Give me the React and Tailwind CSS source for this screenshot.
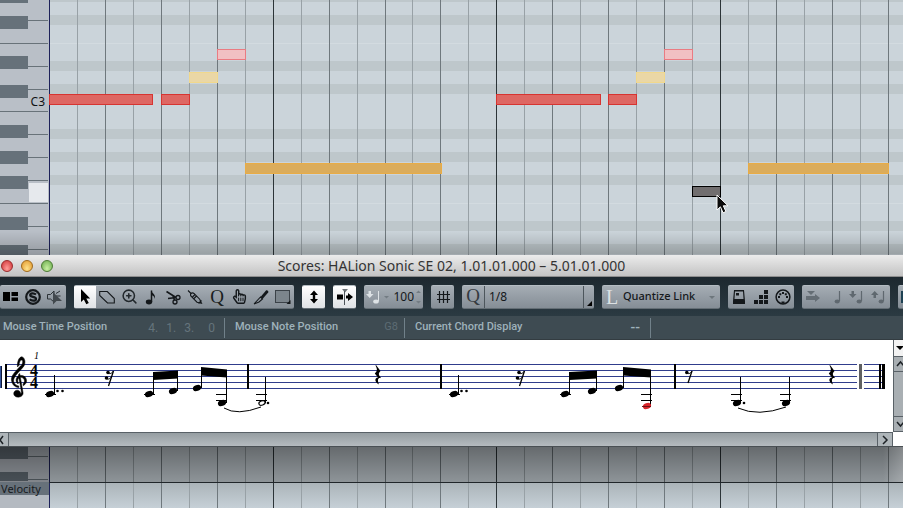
import { useState } from 'react';
import { GiGClef } from 'react-icons/gi';
import { FaRegHandPointer } from 'react-icons/fa';
import { ZoomIn } from 'lucide-react';

// 24 eighth notes take up 671px at this zoom level
const eighthToX = (i) => Math.round((i * 671) / 24);
const GRID_LINES = Array.from({ length: 60 }, (_, i) => i);

const BLACK_ROWS = [-8, 15, 61, 84, 129, 152, 175, 221, 244];
const OCTAVE_LINES = [43, 203];
const BLACK_KEYS = [-10, 16, 56, 85, 125, 151, 176, 217, 245];
const WHITE_KEYS = [21, 23, 23, 23, 22, 23, 23, 23, 23, 23, 23];

const NOTE_COLORS = {
  red: 'bg-[#de6763] border-[#d73431]',
  yellow: 'bg-[#ead7a6] border-[#f1d88c]',
  pink: 'bg-[#f1c0c3] border-[#ea7b82]',
  orange: 'bg-[#dbac5b] border-[#e9ac45]',
  selected: 'bg-[#716e6f] border-black',
};

const NOTES = [
  { x: 0, y: 94, w: 104, color: 'red' },
  { x: 112, y: 94, w: 29, color: 'red' },
  { x: 140, y: 72, w: 29, color: 'yellow' },
  { x: 168, y: 49, w: 29, color: 'pink' },
  { x: 196, y: 163, w: 197, color: 'orange' },
  { x: 447, y: 94, w: 105, color: 'red' },
  { x: 559, y: 94, w: 29, color: 'red' },
  { x: 587, y: 72, w: 29, color: 'yellow' },
  { x: 615, y: 49, w: 29, color: 'pink' },
  { x: 643, y: 186, w: 29, color: 'selected' },
  { x: 699, y: 163, w: 141, color: 'orange' },
];

function lineColor(i) {
  if (i === 0) return 'bg-[#1d2159]';
  if (i % 8 === 0) return 'bg-[#2c3438]';
  return i % 2 === 0 ? 'bg-[#6f787d]' : 'bg-[#98a1a6]';
}

function GridLines() {
  return GRID_LINES.map((i) => (
    <div
      key={i}
      className={`absolute inset-y-0 w-px ${lineColor(i)}`}
      style={{ left: eighthToX(i) }}
    />
  ));
}

function Keyboard() {
  return (
    <div className="relative w-[49px] shrink-0 overflow-hidden bg-[#b9bfc7]">
      {WHITE_KEYS.map((h, i) => (
        <div
          key={i}
          className="mr-px flex items-end justify-end border-b border-[#687279] pr-[3px]"
          style={{ height: h }}
        >
          {i === 4 && <span className="text-[12px] leading-[18px] text-[#101214]">C3</span>}
        </div>
      ))}
      {BLACK_KEYS.map((y) => (
        <div key={y} className="absolute left-0 h-[13px] w-7 bg-[#66717a]" style={{ top: y }} />
      ))}
      <div className="absolute left-[29px] top-[183px] h-[19px] w-[19px] bg-[#e6e9ed]" />
    </div>
  );
}

function PianoRoll() {
  return (
    <section aria-label="Key editor" className="relative flex h-[255px] shrink-0">
      <Keyboard />
      <div className="relative flex-1 overflow-hidden bg-[#cbd4da]">
        {BLACK_ROWS.map((y) => (
          <div key={y} className="absolute inset-x-0 h-[10px] bg-[#bec7cb]" style={{ top: y }} />
        ))}
        {OCTAVE_LINES.map((y) => (
          <div key={y} className="absolute inset-x-0 h-px bg-[#d3dbe0]" style={{ top: y }} />
        ))}
        <GridLines />
        {NOTES.map((n) => (
          <div
            key={n.x}
            className={`absolute h-[11px] border ${NOTE_COLORS[n.color]}`}
            style={{ left: n.x, top: n.y, width: n.w }}
          />
        ))}
        <svg className="absolute left-[667px] top-[194px]" width="14" height="20" viewBox="0 0 14 20">
          <path d="M1 1v15l3.4-3.2 2.7 6 2.8-1.3-2.6-5.7H12z" fill="#0a0a0a" stroke="#fff" strokeWidth="1" />
        </svg>
      </div>
      <div className="absolute inset-x-0 bottom-0 h-6 bg-gradient-to-b from-transparent to-black/20" />
    </section>
  );
}

function TitleBar() {
  return (
    <header className="grid h-[22px] grid-cols-[1fr_auto_1fr] items-center border-b border-[#8d8d8d] bg-gradient-to-b from-[#ececec] to-[#c3c3c3]">
      <div className="flex gap-2 pl-px">
        <button aria-label="Close" className="size-3 rounded-full border border-[#9a2b2b] bg-radial-[at_50%_75%] from-[#ff9c98] to-[#cf2f33]" />
        <button aria-label="Minimize" className="size-3 rounded-full border border-[#a0691a] bg-radial-[at_50%_75%] from-[#ffe28a] to-[#e0952a]" />
        <button aria-label="Zoom" className="size-3 rounded-full border border-[#4c7a34] bg-radial-[at_50%_75%] from-[#c9f0a2] to-[#67a94a]" />
      </div>
      <h1 className="text-[14px] leading-5 text-[#333]">
        Scores: HALion Sonic SE 02, 1.01.01.000 – 5.01.01.000
      </h1>
    </header>
  );
}

function Group({ className = '', children }) {
  return (
    <div
      className={`flex h-6 shrink-0 overflow-hidden rounded-xs border-y border-t-[#b4bcc2] border-b-[#646e75] bg-gradient-to-b from-[#a5adb4] via-[#959da5] to-[#858e96] ${className}`}
    >
      {children}
    </div>
  );
}

function ToolButton({ label, active, wide, onClick, children }) {
  return (
    <button
      aria-label={label}
      aria-pressed={active}
      onClick={onClick}
      className={`flex items-center justify-center ${wide ? 'w-[23px]' : 'w-[22px]'} ${active ? 'bg-gradient-to-b from-white to-[#dfe2e5]' : ''}`}
    >
      {children}
    </button>
  );
}

function Icon({ children, w = 16, className = 'text-[#14181b]' }) {
  return (
    <svg
      width={w}
      height="16"
      viewBox={`0 0 ${w} 16`}
      fill="none"
      stroke="currentColor"
      strokeWidth="1"
      className={`shrink-0 ${className}`}
    >
      {children}
    </svg>
  );
}

const TOOLS = [
  {
    name: 'Object selection',
    icon: (
      <Icon>
        <path d="M4 0v13l2.800-2.600 2.500 4.900 2.500-1.200-2.500-4.700h3.900z" fill="#000" stroke="none" />
      </Icon>
    ),
  },
  {
    name: 'Erase',
    icon: (
      <Icon>
        <path d="M.7 2.500h7.600l7 7v4.500H8.500L.7 6.500z M8.500 14l-.3-.3" strokeWidth="1.100" />
      </Icon>
    ),
  },
  { name: 'Zoom', icon: <ZoomIn size={17} strokeWidth={2.2} className="text-[#22282c]" /> },
  {
    name: 'Insert note',
    icon: (
      <Icon>
        <ellipse cx="6" cy="13" rx="3.200" ry="2.400" fill="currentColor" stroke="none" />
        <path d="M8.500 13V1.500" strokeWidth="1.500" />
        <path d="M8.200 1.500c.8 3 5 3.500 3.500 8.500 0-2.500-1.700-3.500-3.500-4z" fill="currentColor" stroke="none" />
      </Icon>
    ),
  },
  {
    name: 'Split',
    icon: (
      <Icon>
        <path d="M1.500 2.500l9.500 6M3 9.500l8-1M8 7l1.500 4" strokeWidth="1.600" />
        <circle cx="13" cy="8.500" r="2" strokeWidth="1.300" />
        <circle cx="10" cy="13" r="2" strokeWidth="1.300" />
      </Icon>
    ),
  },
  {
    name: 'Glue',
    icon: (
      <Icon>
        <path d="M1 1.500l3 3M4 4.500c1.200-1.200 2.200-.8 3.200.2l5.500 5.500 1.800 4-4.500-1-5.500-5.500c-1-1-1.500-2.200-.5-3.200zM5.500 8L8 5.500M7 9.500L9.500 7M11.500 14.500l3-3" strokeWidth="1.100" />
      </Icon>
    ),
  },
  { name: 'Quantize', icon: <span className="font-serif-q text-[19px] leading-5 text-[#1a1e21]">Q</span> },
  { name: 'Layout', icon: <FaRegHandPointer size={15} className="text-[#14181b]" /> },
  {
    name: 'Cut notes',
    icon: (
      <Icon>
        <path d="M1 15L7.500 8l2 2-3.500 3z" strokeWidth="1.100" />
        <path d="M7.500 8l5.500-6.500c1-1 3 .8 2.200 2L9.500 10z" fill="currentColor" stroke="none" />
      </Icon>
    ),
  },
  {
    name: 'Color',
    icon: (
      <Icon>
        <rect x=".5" y="1.500" width="14" height="12" fill="#7c858c" stroke="#3b4248" />
        <path d="M15.500 11v4h-4z" fill="currentColor" stroke="none" />
      </Icon>
    ),
  },
];

function QuarterNote({ arrow }) {
  return (
    <Icon className="text-[#5f686f]">
      <path d="M12.500 2v10" strokeWidth="1.200" />
      <ellipse cx="10.200" cy="12.500" rx="2.600" ry="2" fill="currentColor" stroke="none" />
      {arrow === 'down' && <path d="M2.500 2h2.500v3h2.500L3.700 9 0 5h2.500z" fill="currentColor" stroke="none" />}
      {arrow === 'up' && <path d="M2.500 9h2.500V6h2.500L3.700 2 0 6h2.500z" fill="currentColor" stroke="none" />}
    </Icon>
  );
}

function Toolbar() {
  const [tool, setTool] = useState('Object selection');

  return (
    <div className="flex h-[39px] items-center gap-2 overflow-hidden bg-gradient-to-b from-[#1d282f] to-[#2b3a42]">
      <Group>
        <ToolButton label="Show zones">
          <Icon>
            <path d="M0 3h7v9H0zM8.500 3H15v4H8.500zM8.500 8.500H15V12H8.500z" fill="#000" stroke="none" />
          </Icon>
        </ToolButton>
        <ToolButton label="Solo editor">
          <Icon>
            <circle cx="8" cy="8" r="6.800" strokeWidth="2.200" />
            <path d="M11 5.500C9 3.600 5 4 5.200 6.200 5.400 8.500 11 7.300 11 9.900c0 2.300-4.500 2.400-6.300.4" strokeWidth="2.200" />
          </Icon>
        </ToolButton>
        <ToolButton label="Acoustic feedback">
          <Icon>
            <path d="M.5 5.500h3L7 2v11L3.500 10h-3zM9 4.500l4-2.500M9 7h4.500" stroke="#2c3337" />
            <path d="M6 3v12.500l3.500-3.500H15z" fill="#42494e" stroke="none" />
          </Icon>
        </ToolButton>
      </Group>

      <Group>
        {TOOLS.map((t) => (
          <ToolButton key={t.name} label={t.name} active={tool === t.name} onClick={() => setTool(t.name)}>
            {t.icon}
          </ToolButton>
        ))}
      </Group>

      <Group>
        <ToolButton label="Link pitch" active wide>
          <Icon>
            <path d="M8 1.500L12 6H9.200v4H12L8 14.500 4 10h2.800V6H4z" fill="#000" stroke="none" />
          </Icon>
        </ToolButton>
      </Group>
      <Group>
        <ToolButton label="Auto scroll" active wide>
          <Icon>
            <path d="M0 5.500h6v5H0zM9 6.500h2V4l5 4-5 4V9.500H9z" fill="#000" stroke="none" />
            <path d="M5 0h6L8 3.500z" fill="#6d7377" stroke="none" />
            <path d="M7.500 2v14" stroke="#4d5459" />
          </Icon>
        </ToolButton>
      </Group>

      <Group className="w-[59px] items-center pl-0.5">
        <Icon className="text-[#dde2e5]">
          <path d="M12.500 2v10" />
          <ellipse cx="10" cy="12.500" rx="2.800" ry="2" fill="currentColor" stroke="none" />
          <path d="M2.500 2h2.500v3h2.500L3.700 9 0 5h2.500z" fill="currentColor" stroke="none" />
        </Icon>
        <Icon w={8} className="text-[#737c83]">
          <path d="M2 7h5L4.500 9.500z" fill="currentColor" stroke="none" />
        </Icon>
        <input
          aria-label="Insert velocity"
          defaultValue="100"
          className="w-6 bg-transparent text-right text-[12px] text-[#14181b] outline-none"
        />
        <Icon w={8} className="text-[#737c83]">
          <path d="M2 4h5L4.500 1.500zM2 12h5l-2.500 2.500z" fill="currentColor" stroke="none" />
        </Icon>
      </Group>

      <Group>
        <ToolButton label="Snap" wide>
          <Icon>
            <path d="M4.500 2v12M8.500 2v12M12.500 2v12M2 5.500h13M2 10.500h13" strokeWidth="1.200" />
          </Icon>
        </ToolButton>
      </Group>

      <Group className="w-[132px]">
        <span className="font-serif-q flex w-[23px] items-center justify-center border-r border-[#4d565c] text-[19px] text-[#343a3f]">
          Q
        </span>
        <select
          aria-label="Quantize preset"
          className="w-[98px] appearance-none bg-transparent pl-1 text-[12px] text-[#14181b] outline-none"
        >
          <option>1/8</option>
        </select>
        <div className="flex flex-1 items-end justify-end border-l border-[#4d565c] pb-0.5 pr-0.5">
          <svg width="5" height="5" viewBox="0 0 5 5">
            <path d="M5 0v5H0z" fill="#000" />
          </svg>
        </div>
      </Group>

      <Group className="w-[118px] items-center pl-1">
        <span className="w-[17px] font-['Liberation_Serif',serif] text-[20px] leading-5 text-[#dce1e4]">L</span>
        <select
          aria-label="Length quantize"
          className="w-20 appearance-none bg-transparent text-[11px] font-medium text-[#14181b] outline-none"
        >
          <option>Quantize Link</option>
        </select>
        <Icon w={14} className="text-[#6d767c]">
          <path d="M6 7h6L9 10z" fill="currentColor" stroke="none" />
        </Icon>
      </Group>

      <Group>
        <ToolButton label="Step input">
          <Icon>
            <path fillRule="evenodd" d="M3 1h10l1 11v3H2v-3zM4 2.500L3.500 10h9L12 2.500zM5 4h3v2.500H5z" fill="currentColor" stroke="none" />
          </Icon>
        </ToolButton>
        <ToolButton label="Chord input">
          <Icon>
            <path d="M1 11h4v4H1zM6 11h4v4H6zM11 11h4v4h-4zM6 6h4v4H6zM11 6h4v4h-4zM11 1h4v4h-4z" fill="currentColor" stroke="none" />
          </Icon>
        </ToolButton>
        <ToolButton label="MIDI input">
          <Icon>
            <circle cx="8" cy="8" r="6.900" strokeWidth="1.500" />
            <path d="M3 7h2v2H3zM4.300 4.300h2v2h-2zM7 3h2v2H7zM9.800 4.300h2v2h-2zM11 7h2v2h-2zM6.500 12.500h3v2h-3z" fill="currentColor" stroke="none" />
          </Icon>
        </ToolButton>
      </Group>

      <Group>
        <ToolButton label="Move insert mode">
          <Icon className="text-[#656e75]">
            <path d="M1 7h9V5l5 4-5 4v-2H1zM2 2h8L6 6z" fill="currentColor" stroke="none" />
          </Icon>
        </ToolButton>
        <ToolButton label="Record pitch">
          <QuarterNote />
        </ToolButton>
        <ToolButton label="Record note-on velocity">
          <QuarterNote arrow="down" />
        </ToolButton>
        <ToolButton label="Record note-off velocity">
          <QuarterNote arrow="up" />
        </ToolButton>
      </Group>

      <Group>
        <ToolButton label="Colors">
          <Icon>
            <path d="M0 2h14v12H0z" fill="#1d4153" stroke="none" />
          </Icon>
        </ToolButton>
      </Group>
    </div>
  );
}

function InfoLine() {
  return (
    <div className="flex h-6 items-center overflow-hidden border-b border-[#333c41] bg-[#3e4b52] font-['Roboto',sans-serif] text-[11px] font-medium whitespace-pre text-[#9fb2bb]">
      <div className="flex h-5 w-[225px] shrink-0 items-center justify-between border-r border-[#71818a] pr-[9px] pl-[3px]">
        <span>Mouse Time Position</span>
        <span className="flex text-[12px] font-normal text-[#65747c]">
          <span className="w-[18px]">4.</span>
          <span className="w-[18px]">1.</span>
          <span className="w-6">3.</span>
          <span>0</span>
        </span>
      </div>
      <div className="flex h-5 w-[180px] shrink-0 items-center justify-between border-r border-[#71818a] pr-[6px] pl-[10px]">
        <span>Mouse Note Position</span>
        <span className="font-normal text-[#5d6c74]">G8</span>
      </div>
      <div className="flex h-5 w-[246px] shrink-0 items-center justify-between border-r border-[#71818a] pr-[10px] pl-[10px]">
        <span>Current Chord Display</span>
        <span className="text-[14px]">--</span>
      </div>
    </div>
  );
}

function Head({ x, y, color = '#000', hollow }) {
  return (
    <ellipse
      cx={x}
      cy={y}
      rx={hollow ? 3.2 : 4.2}
      ry={hollow ? 2.1 : 3}
      transform={`rotate(-20 ${x} ${y})`}
      fill={hollow ? '#fff' : color}
      stroke={hollow ? '#000' : 'none'}
      strokeWidth="1.200"
    />
  );
}

function Ledger({ x, rows }) {
  return rows.map((y) => <path key={y} d={`M${x} ${y + 0.5}h11`} stroke="#000" />);
}

function QuarterRest({ x }) {
  return (
    <g transform={`translate(${x} 25)`}>
      <path d="M2 0l4.500 6c-2.500 2.500-2 4 .7 7.200C4 12.300 3 14.500 5 19.500c-4.500-2.500-4.800-6.500-1-7L.8 8.500C3.500 6 3.500 4 1.500.5z" fill="#000" />
    </g>
  );
}

function EighthRest({ x, double }) {
  return (
    <g transform={`translate(${x} 30)`} stroke="#000" fill="none">
      <path d={double ? 'M8.500 1L3.500 16' : 'M7 1L3 13'} strokeWidth="1.300" />
      <path d={double ? 'M2.500 2c1 2.500 4 2 6-1M1 7.500c1 2.500 4 2 5.500-1' : 'M1.500 2c1 2.500 4 2 5.500-1'} />
      <circle cx={double ? 3 : 1.8} cy="2.500" r="1.800" fill="#000" stroke="none" />
      {double && <circle cx="1.500" cy="8" r="1.800" fill="#000" stroke="none" />}
    </g>
  );
}

// Dotted quarter, rest and the two beamed pairs that open measures 1 and 3
function Phrase({ x, beams, last, lastY, lastColor }) {
  const [a, b, c, d] = beams;
  return (
    <g>
      <Head x={x} y={54} />
      <path d={`M${x - 5} 54.500h11M${x + 4.5} 35v19`} stroke="#000" />
      <circle cx={x + 7.5} cy="51" r="1.300" />
      <circle cx={x + 12.5} cy="51" r="1.300" />
      <Head x={a - 4} y={54} />
      <path d={`M${a - 9} 54.500h11M${a + 0.5} 34v20M${b + 0.5} 32v19`} stroke="#000" />
      <Head x={b - 4} y={51} />
      <path d={`M${a} 32L${b + 1} 30.500v8L${a} 40z`} />
      <Head x={c - 4} y={48} />
      <path d={`M${c + 0.5} 29v19M${d + 0.5} 31v${lastY - 31}`} stroke="#000" />
      <path d={`M${c} 27L${d + 1} 29.500v8L${c} 35.500z`} />
      <Ledger x={last - 6} rows={[54, 60]} />
      <Head x={last} y={lastY} color={lastColor} />
      {lastColor && <path d={`M${last - 5} 66.500h9`} stroke="#6d1016" />}
    </g>
  );
}

function Score() {
  return (
    <svg width="100%" height="92" className="block min-w-0 flex-1 bg-white" role="img" aria-label="Score">
      {[24, 30, 36, 42, 48].map((y) => (
        <path key={y} d={`M5 ${y + 0.5}h880`} stroke="#303d8c" />
      ))}
      <rect x="0" y="26" width="2" height="22" fill="#33539c" />
      <path d="M1.500 26v22" stroke="#101838" />
      <path d="M6 24v25M248 24v25M441 24v25M675 24v25" stroke="#000" strokeWidth="2" />
      <path d="M857 22h7v29h-7z" fill="#fff" />
      <path d="M860.500 24v25" stroke="#5f6062" strokeWidth="3" />
      <path d="M880 24v25" stroke="#000" strokeWidth="2" />
      <path d="M883.500 24v25" stroke="#000" strokeWidth="3" />

      <GiGClef x="-3" y="15" size={44} color="#000" stroke="#000" strokeWidth="6" />
      <text x="34" y="19" className="font-['Liberation_Serif',serif] text-[10px] italic">1</text>
      <text x="30" y="36" className="font-['Liberation_Serif',serif] text-[16px] font-bold">4</text>
      <text x="30" y="48" className="font-['Liberation_Serif',serif] text-[16px] font-bold">4</text>

      <Phrase x={50} beams={[153, 177, 201, 226]} last={222} lastY={63} />
      <EighthRest x={105} double />
      <path d="M224 68q13 8 37-1" fill="none" stroke="#000" />
      <Ledger x={256} rows={[54, 60]} />
      <Head x={262} y={63} hollow />
      <path d="M265.500 37v26" stroke="#000" />
      <circle cx="268" cy="63" r="1.300" />
      <QuarterRest x={374} />

      <Phrase x={454} beams={[569, 596, 623, 650]} last={647} lastY={66} lastColor="#d9262c" />
      <EighthRest x={516} double />

      <EighthRest x={685} />
      <Ledger x={731} rows={[54, 60]} />
      <Head x={737} y={63} />
      <path d="M740.500 37v26" stroke="#000" />
      <circle cx="744" cy="63" r="1.300" />
      <path d="M738 68q20 9 48-1" fill="none" stroke="#000" />
      <Ledger x={780} rows={[54, 60]} />
      <Head x={786} y={63} />
      <path d="M789.500 37v26" stroke="#000" />
      <QuarterRest x={828} />
    </svg>
  );
}

function Chevron({ d }) {
  return (
    <svg width="10" height="10" viewBox="0 0 10 10" fill="none" stroke="#1d2226" strokeWidth="1.500" className="shrink-0">
      <path d={d} />
    </svg>
  );
}

function ScoreWindow() {
  return (
    <section aria-label="Score editor" className="relative shrink-0">
      <TitleBar />
      <Toolbar />
      <InfoLine />
      <div className="flex">
        <Score />
        <div className="flex w-[10px] flex-col overflow-hidden border-l border-[#596167] bg-[#a9afb3]">
          <button aria-label="Options" className="flex h-4 items-center bg-[#f3f3f3]">
            <svg width="10" height="10" viewBox="0 0 10 10" className="shrink-0">
              <path d="M2 3h8L6 7z" fill="#000" />
            </svg>
          </button>
          <button aria-label="Scroll up" className="flex h-4 items-center border-y border-[#596167]">
            <Chevron d="M3 7l3.500-4L10 7" />
          </button>
          <div className="flex-1" />
          <button aria-label="Scroll down" className="flex h-4 items-center border-y border-[#596167]">
            <Chevron d="M3 3l3.500 4L10 3" />
          </button>
        </div>
      </div>
      <div className="flex h-[15px] border-b border-[#4a5054] bg-white">
        <button aria-label="Scroll left" className="flex w-[9px] items-center border-t border-r border-[#596167] bg-[#aeb5b9]">
          <Chevron d="M3 1L0 5l3 4" />
        </button>
        <div className="flex-1 border-t border-[#596167] bg-gradient-to-b from-[#969ea2] to-[#b5bbbf]" />
        <button aria-label="Scroll right" className="mr-[10px] flex w-4 items-center justify-center border-x border-t border-[#596167] bg-[#aeb5b9]">
          <Chevron d="M3 1l4 4-4 4" />
        </button>
      </div>
    </section>
  );
}

function LowerRoll() {
  return (
    <section aria-label="Controller lane" className="flex min-h-[60px] flex-1 flex-col">
      <div className="relative flex h-[35px] shrink-0">
        <div className="relative w-[49px] shrink-0 bg-[#b9bfc7]">
          <div className="mr-px h-[10px] border-b border-[#687279]" />
          <div className="mr-px h-[23px] border-b border-[#687279]" />
          <div className="absolute left-0 top-0 h-3 w-7 bg-[#66717a]" />
          <div className="absolute left-0 top-[25px] h-[9px] w-7 bg-[#66717a]" />
        </div>
        <div className="relative flex-1 overflow-hidden bg-[#cbd4da]">
          <GridLines />
        </div>
        <div className="absolute inset-0 bg-gradient-to-b from-black/50 to-black/30" />
        <div className="absolute inset-y-0 right-0 w-5 bg-gradient-to-r from-transparent to-white/20" />
      </div>
      <div className="flex flex-1">
        <div className="w-[49px] shrink-0 bg-[#b4bac1]">
          <div className="h-[13px] bg-[#67717a] pl-px text-[11px] leading-[13px] text-[#171b1e]">Velocity</div>
        </div>
        <div className="relative flex-1 overflow-hidden border-t border-[#20262a] bg-gradient-to-b from-[#abb4b9] to-[#c6d0d7]">
          <GridLines />
        </div>
      </div>
    </section>
  );
}

export default function App() {
  return (
    <div className="flex min-h-screen w-full flex-col overflow-hidden bg-[#cbd4da] font-['Noto_Sans','Open_Sans',sans-serif] [&_.font-serif-q]:font-['Liberation_Serif',serif]">
      <PianoRoll />
      <ScoreWindow />
      <LowerRoll />
    </div>
  );
}
